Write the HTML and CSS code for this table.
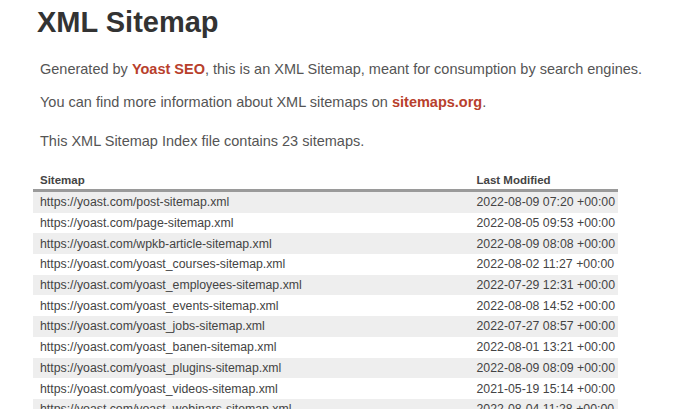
FILE: index.html
```html
<!DOCTYPE html>
<html>
<head>
<meta charset="utf-8">
<link rel="stylesheet" href="styles.css">
</head>
<body>
<div class="page">
  <h1 class="title">XML Sitemap</h1>
  <p class="intro">Generated by <a href="#">Yoast SEO</a>, this is an XML Sitemap, meant for consumption by search engines.</p>
  <p class="intro">You can find more information about XML sitemaps on <a href="#">sitemaps.org</a>.</p>
  <p class="intro count">This XML Sitemap Index file contains 23 sitemaps.</p>
  <table class="sitemap">
    <thead>
      <tr><th class="col-url">Sitemap</th><th class="col-date">Last Modified</th></tr>
    </thead>
    <tbody>
      <tr><td>https://yoast.com/post-sitemap.xml</td><td class="date">2022-08-09 07:20 +00:00</td></tr>
      <tr><td>https://yoast.com/page-sitemap.xml</td><td class="date">2022-08-05 09:53 +00:00</td></tr>
      <tr><td>https://yoast.com/wpkb-article-sitemap.xml</td><td class="date">2022-08-09 08:08 +00:00</td></tr>
      <tr><td>https://yoast.com/yoast_courses-sitemap.xml</td><td class="date">2022-08-02 11:27 +00:00</td></tr>
      <tr><td>https://yoast.com/yoast_employees-sitemap.xml</td><td class="date">2022-07-29 12:31 +00:00</td></tr>
      <tr><td>https://yoast.com/yoast_events-sitemap.xml</td><td class="date">2022-08-08 14:52 +00:00</td></tr>
      <tr><td>https://yoast.com/yoast_jobs-sitemap.xml</td><td class="date">2022-07-27 08:57 +00:00</td></tr>
      <tr><td>https://yoast.com/yoast_banen-sitemap.xml</td><td class="date">2022-08-01 13:21 +00:00</td></tr>
      <tr><td>https://yoast.com/yoast_plugins-sitemap.xml</td><td class="date">2022-08-09 08:09 +00:00</td></tr>
      <tr><td>https://yoast.com/yoast_videos-sitemap.xml</td><td class="date">2021-05-19 15:14 +00:00</td></tr>
      <tr><td>https://yoast.com/yoast_webinars-sitemap.xml</td><td class="date">2022-08-04 11:28 +00:00</td></tr>
    </tbody>
  </table>
</div>
</body>
</html>
```
FILE: styles.css
```css
html, body {
  margin: 0;
  padding: 0;
  background: #ffffff;
}
body {
  font-family: "Liberation Sans", Arial, sans-serif;
  color: #555555;
}
.page {
  padding: 0 0 0 33px;
}
.title {
  margin: 0;
  padding: 4px 0 0 4px;
  font-size: 29px;
  line-height: 36px;
  font-weight: bold;
  color: #333333;
}
.intro {
  margin: 0;
  padding-left: 7px;
  font-size: 14.5px;
  line-height: 18px;
}
.title + .intro {
  margin-top: 20px;
}
.intro + .intro {
  margin-top: 15px;
}
.intro.count {
  margin-top: 21px;
}
.intro a {
  color: #b8402c;
  font-weight: bold;
  text-decoration: none;
}
.sitemap {
  margin-top: 22px;
  border-collapse: collapse;
  width: 585px;
  font-size: 12.3px;
  color: #444444;
}
.sitemap th {
  text-align: left;
  font-size: 11.5px;
  font-weight: bold;
  padding: 2px 7px 3px 7px;
  border-bottom: 3px solid #9a9a9a;
}
.sitemap .col-date {
  width: 125px;
  padding-right: 3px;
}
.sitemap td {
  padding: 0 7px;
  height: 20.7px;
  line-height: 20px;
  white-space: nowrap;
}
.sitemap td.date {
  padding-right: 3px;
}
.sitemap tbody tr:nth-child(odd) td {
  background: #eeeeee;
}
```
